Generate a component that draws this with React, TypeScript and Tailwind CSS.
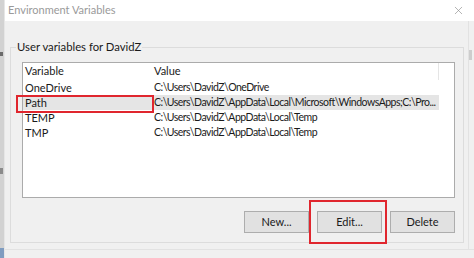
import { X } from 'lucide-react';

const rows = [
  { name: 'OneDrive', value: 'C:\\Users\\DavidZ\\OneDrive' },
  { name: 'Path', value: 'C:\\Users\\DavidZ\\AppData\\Local\\Microsoft\\WindowsApps;C:\\Pro...', selected: true },
  { name: 'TEMP', value: 'C:\\Users\\DavidZ\\AppData\\Local\\Temp' },
  { name: 'TMP', value: 'C:\\Users\\DavidZ\\AppData\\Local\\Temp' },
];

function WinButton({ label }: { label: string }) {
  return (
    <button className="w-[65px] h-[22px] bg-[#e1e1e1] border border-[#adadad] text-[11px] text-[#1a1a1a] flex items-center justify-center">
      {label}
    </button>
  );
}

export default function App() {
  return (
    <div className="w-[474px] h-[258px] flex bg-[#f0f0f0] overflow-hidden text-[#1a1a1a] font-['Lato',sans-serif] relative">
      {/* window behind */}
      <div className="w-[4px] h-full bg-[#d2d2d2] flex flex-col shrink-0">
        <div className="h-[52px]" />
        <div className="h-[4px] w-[3px] bg-[#6b6b6b]" />
        <div className="h-[112px]" />
        <div className="h-[6px] w-[3px] bg-[#8a8a8a]" />
        <div className="flex-1" />
        <div className="h-[10px] w-[4px] bg-[#7f9cc0]" />
      </div>

      {/* dialog */}
      <div className="flex-1 flex flex-col border-l border-[#e6e6e6] min-w-0">
        <div className="h-[21px] bg-white flex items-center justify-between pl-[3px] pr-[9px]">
          <span className="text-[11px] text-[#9a9a9a]">Environment Variables</span>
          <X className="w-[13px] h-[13px] text-[#8c8c8c]" strokeWidth={1.2} />
        </div>

        <div className="flex-1 flex pr-[2px]">
          <div className="flex-1 flex flex-col border-r border-[#e2e2e2] pl-[5px] pr-[4px] min-w-0">
            <div className="mt-[26px] h-[196px] border border-[#dcdcdc] relative pl-[11px] pr-[8px] pt-[14px]">
              <span className="absolute left-[5px] -top-[9px] bg-[#f0f0f0] px-[1px] text-[11.3px] leading-[16px] text-[#1a1a1a]">
                User variables for DavidZ
              </span>

              {/* list view */}
              <div className="h-[136px] bg-white border border-[#ababab] overflow-hidden">
                <div className="w-[416px] h-[17px] flex items-center border-r border-[#e5e5e5] text-[11px]">
                  <div className="w-[128px] shrink-0 pl-[2px]">Variable</div>
                  <div className="pl-[3px]">Value</div>
                </div>
                {rows.map((r) => (
                  <div
                    key={r.name}
                    className={`w-[416px] h-[15px] flex items-center text-[11px] leading-[15px] whitespace-nowrap ${r.selected ? 'bg-[#e5e5e5]' : ''}`}
                  >
                    <div className="w-[128px] shrink-0 pl-[2px]">{r.name}</div>
                    <div className="pl-[3px] shrink-0 text-[10.5px] tracking-[-0.5px]">{r.value}</div>
                  </div>
                ))}
              </div>

              <div className="mt-[13px] flex justify-end gap-[8px]">
                <WinButton label="New..." />
                <WinButton label="Edit..." />
                <WinButton label="Delete" />
              </div>
            </div>
          </div>
          <div className="w-[3px] flex flex-col shrink-0">
            <div className="h-[29px]" />
            <div className="h-[10px] bg-[#cdcdcd]" />
          </div>
        </div>
        <div className="h-[9px] border-t border-[#e2e2e2]" />
      </div>

      {/* annotation boxes */}
      <div className="absolute left-[16px] top-[95px] w-[138px] h-[18px] border-2 border-[#e0262e]" />
      <div className="absolute left-[309px] top-[200px] w-[78px] h-[44px] border-2 border-[#e0262e]" />
    </div>
  );
}
